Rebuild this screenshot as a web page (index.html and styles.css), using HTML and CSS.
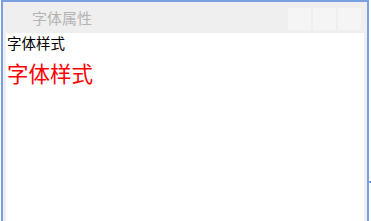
FILE: index.html
```html
<!DOCTYPE html>
<html lang="zh-CN">
    <head>
        <meta charset="UTF-8">
        <meta name="viewport" content="width=device-width, initial-scale=1.0">
        <title>字体属性</title>
        <link rel="stylesheet" href="styles.css">
    </head>
    <body>
        <div class="window">
            <div class="titlebar">
                <span class="title">字体属性</span>
                <div class="buttons">
                    <div class="btn"></div>
                    <div class="btn"></div>
                    <div class="btn"></div>
                </div>
            </div>
            <div class="content">
                <div class="normal">字体样式</div>
                <div class="big">字体样式</div>
            </div>
            <div class="grip"></div>
        </div>
    </body>
</html>
```

FILE: styles.css
```css
html, body {
    margin: 0;
    padding: 0;
    background: #ffffff;
}

body {
    font-family: "Noto Sans CJK SC", "Noto Sans", sans-serif;
}

.window {
    --frame-blue: #7b9fe0;
    --frame-gray: #efefef;
    position: relative;
    box-sizing: border-box;
    width: 368px;
    height: 221px;
    margin-left: 1px;
    border-top: 2px solid var(--frame-blue);
    border-left: 2px solid var(--frame-blue);
    border-right: 2px solid var(--frame-blue);
    background: var(--frame-gray);
    display: flex;
    flex-direction: column;
    padding: 0 3px 0 3px;
}

.titlebar {
    height: 31px;
    display: flex;
    align-items: center;
    justify-content: space-between;
}

.title {
    margin-left: 26px;
    font-size: 15px;
    color: #b4b4b4;
    line-height: 20px;
}

.buttons {
    display: flex;
    gap: 2px;
    margin-right: 3px;
    margin-top: 2px;
}

.btn {
    width: 23px;
    height: 22px;
    background: #f5f5f5;
}

.content {
    flex: 1;
    background: #ffffff;
    padding-left: 1px;
}

.normal {
    font-size: 14.5px;
    line-height: 20px;
    color: #000000;
}

.big {
    margin-top: 5px;
    font-size: 21.5px;
    line-height: 30px;
    color: #ff0000;
}

.grip {
    position: absolute;
    right: -4px;
    top: 179px;
    width: 3px;
    height: 2px;
    background: var(--frame-blue);
}
```
